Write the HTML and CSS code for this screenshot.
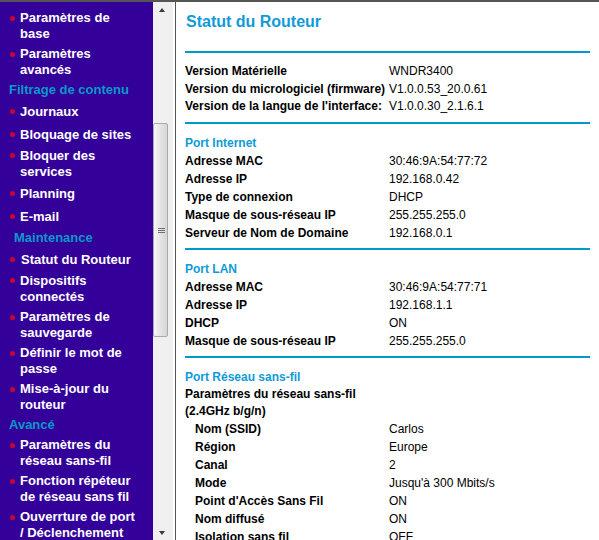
FILE: index.html
```html
<!DOCTYPE html>
<html lang="fr">
<head>
<meta charset="utf-8">
<title>Statut du Routeur</title>
<link rel="stylesheet" href="styles.css">
</head>
<body>
<div class="window">
  <div class="menu-frame">
    <nav class="menu">
      <div class="menu-inner">
        <div class="menu-head menu-head-first">Configuration</div>
        <div class="item">Paramètres de base</div>
        <div class="item">Paramètres avancés</div>
        <div class="menu-head">Filtrage de contenu</div>
        <div class="item gap2">Journaux</div>
        <div class="item gap3">Bloquage de sites</div>
        <div class="item gap1">Bloquer des services</div>
        <div class="item gap2">Planning</div>
        <div class="item gap3">E-mail</div>
        <div class="menu-head menu-head-indent gap1">Maintenance</div>
        <div class="item item-indent gap2">Statut du Routeur</div>
        <div class="item gap1">Dispositifs connectés</div>
        <div class="item">Paramètres de sauvegarde</div>
        <div class="item">Définir le mot de passe</div>
        <div class="item">Mise-à-jour du routeur</div>
        <div class="menu-head">Avancé</div>
        <div class="item">Paramètres du réseau sans-fil</div>
        <div class="item">Fonction répéteur de réseau sans fil</div>
        <div class="item">Ouverrture de port / Déclenchement de port</div>
      </div>
    </nav>
    <div class="scrollbar">
      <div class="sb-btn"><span class="arrow-up"></span></div>
      <div class="sb-track">
        <div class="sb-thumb">
          <svg class="grip" width="7" height="5" viewBox="0 0 7 5"><path d="M0 0.5H7M0 2.5H7M0 4.5H7" stroke="#6e6e6e" stroke-width="1"/></svg>
        </div>
      </div>
      <div class="sb-btn"><span class="arrow-down"></span></div>
    </div>
    <div class="frame-border"></div>
  </div>

  <main class="content">
    <h1 class="title">Statut du Routeur</h1>

    <section class="section section-first">
      <div class="row"><span class="label">Version Matérielle</span><span class="value">WNDR3400</span></div>
      <div class="row"><span class="label">Version du micrologiciel (firmware)</span><span class="value">V1.0.0.53_20.0.61</span></div>
      <div class="row"><span class="label">Version de la langue de l'interface:</span><span class="value">V1.0.0.30_2.1.6.1</span></div>
    </section>

    <section class="section">
      <h2 class="sec-title">Port Internet</h2>
      <div class="row"><span class="label">Adresse MAC</span><span class="value">30:46:9A:54:77:72</span></div>
      <div class="row"><span class="label">Adresse IP</span><span class="value">192.168.0.42</span></div>
      <div class="row"><span class="label">Type de connexion</span><span class="value">DHCP</span></div>
      <div class="row"><span class="label">Masque de sous-réseau IP</span><span class="value">255.255.255.0</span></div>
      <div class="row"><span class="label">Serveur de Nom de Domaine</span><span class="value">192.168.0.1</span></div>
    </section>

    <section class="section">
      <h2 class="sec-title">Port LAN</h2>
      <div class="row"><span class="label">Adresse MAC</span><span class="value">30:46:9A:54:77:71</span></div>
      <div class="row"><span class="label">Adresse IP</span><span class="value">192.168.1.1</span></div>
      <div class="row"><span class="label">DHCP</span><span class="value">ON</span></div>
      <div class="row"><span class="label">Masque de sous-réseau IP</span><span class="value">255.255.255.0</span></div>
    </section>

    <section class="section">
      <h2 class="sec-title">Port Réseau sans-fil</h2>
      <div class="row row-sub"><span class="label">Paramètres du réseau sans-fil (2.4GHz b/g/n)</span></div>
      <div class="row row-indent"><span class="label">Nom (SSID)</span><span class="value">Carlos</span></div>
      <div class="row row-indent"><span class="label">Région</span><span class="value">Europe</span></div>
      <div class="row row-indent"><span class="label">Canal</span><span class="value">2</span></div>
      <div class="row row-indent"><span class="label">Mode</span><span class="value">Jusqu'à 300 Mbits/s</span></div>
      <div class="row row-indent"><span class="label">Point d'Accès Sans Fil</span><span class="value">ON</span></div>
      <div class="row row-indent"><span class="label">Nom diffusé</span><span class="value">ON</span></div>
      <div class="row row-indent"><span class="label">Isolation sans fil</span><span class="value">OFF</span></div>
    </section>
  </main>
</div>
</body>
</html>
```

FILE: styles.css
```css
html, body {
  margin: 0;
  padding: 0;
  background: #ffffff;
}

body {
  font-family: Arial, "Liberation Sans", sans-serif;
  color: #000000;
}

.window {
  width: 599px;
  height: 540px;
  box-sizing: border-box;
  border-top: 2px solid #555555;
  display: flex;
  overflow: hidden;
}

/* ---------- left menu frame ---------- */
.menu-frame {
  display: flex;
  flex-shrink: 0;
  height: 100%;
}

.menu {
  width: 153px;
  height: 100%;
  background: #330099;
  overflow: hidden;
  flex-shrink: 0;
}

.menu-inner {
  margin-top: -15px;
}

.menu-head {
  font-size: 13px;
  font-weight: bold;
  line-height: 16px;
  color: #0b99cc;
  padding: 2px 0 2px 9px;
  white-space: nowrap;
}

.menu-head-first {
  padding: 0 0 5px 19px;
}

.menu-head-indent {
  padding-left: 14px;
}

.item {
  position: relative;
  font-size: 13px;
  font-weight: bold;
  line-height: 16px;
  color: #ffffff;
  padding: 2px 14px 2px 20px;
}

.item::before {
  content: "";
  position: absolute;
  left: 10px;
  top: 8px;
  width: 5px;
  height: 5px;
  border-radius: 50%;
  background: #cc0033;
}

.item-indent {
  padding-left: 21px;
}

.gap1 { padding-top: 3px; }
.gap2 { padding-top: 4px; }
.gap3 { padding-top: 5px; }
.gap1.item::before { top: 8px; }
.gap2.item::before { top: 9px; }
.gap3.item::before { top: 10px; }

/* ---------- scrollbar ---------- */
.scrollbar {
  width: 17px;
  height: 100%;
  background: #f0f0f0;
  display: flex;
  flex-direction: column;
  flex-shrink: 0;
}

.sb-btn {
  height: 17px;
  flex-shrink: 0;
  display: flex;
  align-items: center;
  justify-content: center;
}

.arrow-up {
  width: 0;
  height: 0;
  border-left: 3.5px solid transparent;
  border-right: 3.5px solid transparent;
  border-bottom: 4px solid #3a3a3a;
  margin-top: -2px;
}

.arrow-down {
  width: 0;
  height: 0;
  border-left: 3.5px solid transparent;
  border-right: 3.5px solid transparent;
  border-top: 4px solid #3a3a3a;
  margin-top: 3px;
}

.sb-track {
  flex: 1;
  display: flex;
  flex-direction: column;
  align-items: center;
}

.sb-thumb {
  margin-top: 104px;
  width: 13px;
  height: 212px;
  margin-left: -2px;
  border: 1px solid #a9a9a9;
  border-radius: 2px;
  background: linear-gradient(to right, #f6f6f6, #e4e4e4 50%, #d6d6d6);
  display: flex;
  align-items: center;
  justify-content: center;
}

.grip {
  display: block;
  margin-left: 1px;
}

.frame-border {
  width: 6px;
  height: 100%;
  flex-shrink: 0;
  background: linear-gradient(to right, #f0f0f0 0, #f0f0f0 3px, #ffffff 3px, #ffffff 5px, #555555 5px, #555555 6px);
}

/* ---------- content ---------- */
.content {
  flex: 1;
  min-width: 0;
  padding: 10px 9px 0 9px;
  overflow: hidden;
}

.title {
  margin: 0;
  padding: 0 0 20px 1px;
  font-size: 16px;
  line-height: 19px;
  font-weight: bold;
  color: #109ad8;
  border-bottom: 2px solid #0099cc;
}

.section {
  padding: 11px 0 6px 0;
  border-bottom: 2px solid #0099cc;
}

.section-first {
  padding-top: 10px;
}

.section-first .row {
  line-height: 17.5px;
}

.sec-title {
  margin: 0;
  font-size: 12px;
  line-height: 17px;
  font-weight: bold;
  color: #109ad8;
}

.row {
  display: grid;
  grid-template-columns: 204px 1fr;
  font-size: 12px;
  line-height: 18px;
}

.label {
  font-weight: bold;
}

.value {
  font-weight: normal;
}

.row-sub {
  line-height: 17px;
}

.row-indent {
  grid-template-columns: 194px 1fr;
  padding-left: 10px;
}
```
